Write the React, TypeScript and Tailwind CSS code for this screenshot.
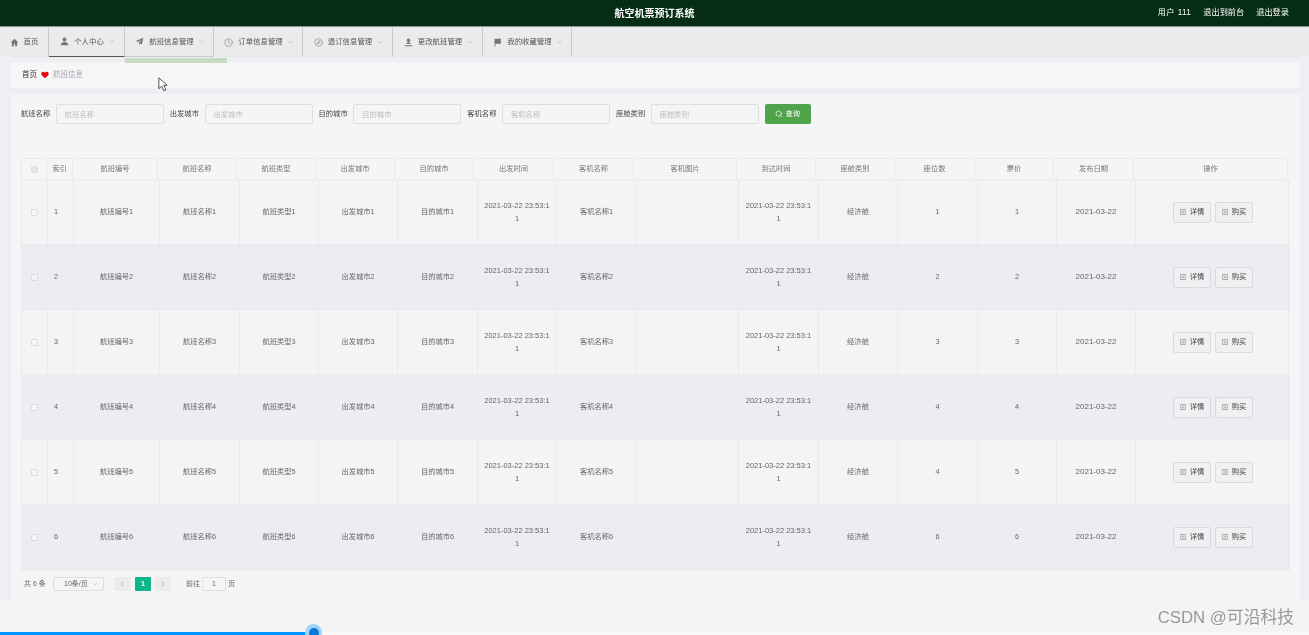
import { ChevronDown, ChevronLeft, ChevronRight, Clock, Compass, Search } from "lucide-react";
import { ReactNode } from "react";

const tabs: { label: string; icon: ReactNode; width: string; active?: boolean; open?: boolean }[] = [
  {
    label: "个人中心",
    width: "w-[76px]",
    active: true,
    icon: (
      <svg viewBox="0 0 12 12" className="h-[9px] w-[9px] fill-[#777]">
        <circle cx="6" cy="3.4" r="2.6" />
        <path d="M1 11c0-3 2.2-4.2 5-4.2s5 1.2 5 4.2z" />
      </svg>
    ),
  },
  {
    label: "航班信息管理",
    width: "w-[89px]",
    open: true,
    icon: (
      <svg viewBox="0 0 12 12" className="h-[9px] w-[9px] fill-[#777]">
        <path d="M11 1 1 5.2l3.2 1.5L8.5 3.5 5.4 7.6V11l1.9-2.4 2 1z" />
      </svg>
    ),
  },
  { label: "订单信息管理", width: "w-[89px]", icon: <Clock className="h-[9px] w-[9px] text-[#777]" strokeWidth={1.5} /> },
  { label: "退订信息管理", width: "w-[90px]", icon: <Compass className="h-[9px] w-[9px] text-[#777]" strokeWidth={1.5} /> },
  {
    label: "更改航班管理",
    width: "w-[90px]",
    icon: (
      <svg viewBox="0 0 12 12" className="h-[9px] w-[9px] fill-[#777]">
        <circle cx="6" cy="3" r="2.2" />
        <path d="M3 8c0-1.8 1.4-2.5 3-2.5S9 6.200 9 8zM1 9.500h10V11H1z" />
      </svg>
    ),
  },
  {
    label: "我的收藏管理",
    width: "w-[89px]",
    icon: (
      <svg viewBox="0 0 12 12" className="h-[9px] w-[9px] fill-[#777]">
        <path d="M2 1h8.500v6.500H3.200V11.500H2z" />
      </svg>
    ),
  },
];

const filters = ["航班名称", "出发城市", "目的城市", "客机名称", "座舱类别"];

const headers = [
  "索引",
  "航班编号",
  "航班名称",
  "航班类型",
  "出发城市",
  "目的城市",
  "出发时间",
  "客机名称",
  "客机图片",
  "到达时间",
  "座舱类别",
  "座位数",
  "票价",
  "发布日期",
  "操作",
];

const rows = [
  { id: 1, seats: 1 },
  { id: 2, seats: 2 },
  { id: 3, seats: 3 },
  { id: 4, seats: 4 },
  { id: 5, seats: 4 },
  { id: 6, seats: 6 },
];

const headCols =
  "grid-cols-[25px_26px_85px_79px_79px_79px_79px_80px_80px_103px_79px_79px_80px_79px_80px_154px]";
const bodyCols =
  "grid-cols-[26px_26px_86px_80px_79px_79px_80px_79px_80px_102px_80px_79px_80px_79px_79px_153px]";

function Cell({ children, className = "" }: { children?: ReactNode; className?: string }) {
  return (
    <div className={`flex items-center justify-center border-r border-[#e9e9ee] px-1.5 text-center ${className}`}>
      {children}
    </div>
  );
}

function DocIcon() {
  return (
    <svg viewBox="0 0 8 8" className="h-[6px] w-[6px] fill-none stroke-[#999]">
      <rect x="1" y="0.500" width="6" height="7" />
      <path d="M2.500 3h3M2.500 5h3" />
    </svg>
  );
}

function RowButton({ label }: { label: string }) {
  return (
    <button className="flex h-[21px] w-[38px] items-center justify-center gap-1 rounded-[2px] border border-[#ddd8dd] bg-[#f0eff2] text-[7.3px] text-[#444]">
      <DocIcon />
      {label}
    </button>
  );
}

export default function App() {
  return (
    <div className="relative h-[635px] overflow-hidden bg-[#f4f4f4] font-['Liberation_Sans','Noto_Sans_CJK_SC',sans-serif] blur-[0.4px]">
      <header className="grid h-[27px] grid-cols-[1fr_auto_1fr] items-center border-b border-[#8a948c] bg-[#052d13] text-white">
        <div />
        <div className="text-[10px] font-bold">航空机票预订系统</div>
        <div className="flex justify-end gap-3 pr-5 text-[8.2px]">
          <span className="tracking-[0.4px]">用户 111</span>
          <span>退出到前台</span>
          <span>退出登录</span>
        </div>
      </header>

      <nav className="flex h-[30px] bg-[#ebebed] text-[7.4px] text-[#555]">
        <div className="flex w-[49px] items-center justify-center gap-[5px] border-r border-[#c9c9cc]">
          <svg viewBox="0 0 12 12" className="h-[9px] w-[9px] fill-[#777]">
            <path d="M6 1 .8 6h1.700v5h2.700V7.600h1.600V11h2.700V6h1.700z" />
          </svg>
          首页
        </div>
        {tabs.map((tab) => (
          <div
            key={tab.label}
            className={`flex items-center justify-center gap-1 border-r border-[#c9c9cc] pl-0.5 ${tab.width} ${
              tab.active ? "border-b border-b-[#555]" : tab.open ? "border-b border-b-[#c9c9cc]" : ""
            }`}
          >
            {tab.icon}
            <span className="ml-px">{tab.label}</span>
            <ChevronDown className="h-[7px] w-[7px] text-[#aaa]" />
          </div>
        ))}
      </nav>

      <main className="flex h-[544px] flex-col gap-1.5 bg-[#eeeff3] pt-[5px] pr-[9px] pl-[11px]">
        <div className="flex h-[26px] items-center gap-1 bg-[#f6f6f6] pl-[11px] text-[7.5px]">
          <span className="text-[#333]">首页</span>
          <svg viewBox="0 0 12 12" className="h-2 w-2 fill-[#e60012]">
            <path d="M6 11 1.200 6.200C-.5 4 1 1.200 3.300 1.200 4.500 1.200 5.500 2 6 3c.5-1 1.500-1.800 2.700-1.800C11 1.200 12.500 4 10.800 6.200z" />
          </svg>
          <span className="text-[#a3a8b5]">航班信息</span>
        </div>

        <section className="h-[507px] bg-[#f5f5f5] pt-2.5 pl-2.5">
          <div className="flex h-5 items-center text-[7.3px] text-[#444]">
            {filters.map((name) => (
              <div key={name} className="flex items-center gap-1.5 pr-1.5">
                <span className="w-[28.75px] whitespace-nowrap">{name}</span>
                <input
                  placeholder={name}
                  className="h-5 w-[108px] rounded-[2px] border border-[#dfdfe2] bg-[#f5f5f5] px-2 text-[7.3px] placeholder:text-[#b9bcc3]"
                />
              </div>
            ))}
            <button className="flex h-5 w-[46px] items-center justify-center gap-0.5 rounded-[2px] bg-[#4fa34a] text-[7.3px] text-white">
              <Search className="h-2 w-2" />
              查询
            </button>
          </div>

          <div className="mt-[34px] w-[1269px]">
            <div className={`grid h-[22px] w-[1267px] border-y border-l border-[#e9e9ee] text-[7.3px] text-[#777] ${headCols}`}>
              <Cell>
                <span className="h-[7px] w-[7px] rounded-[1px] border border-[#dcdce6] bg-[#e6e6ee]" />
              </Cell>
              {headers.map((title) => (
                <Cell key={title} className="whitespace-nowrap">
                  {title}
                </Cell>
              ))}
            </div>

            {rows.map((row) => (
              <div
                key={row.id}
                className={`grid h-[65px] border-b border-l border-[#e9e9ee] text-[7.3px] text-[#666] ${bodyCols} ${
                  row.id % 2 === 0 ? "bg-[#ecedf2]" : "bg-[#f4f4f5]"
                }`}
              >
                <Cell>
                  <span className="h-[7px] w-[7px] rounded-[1px] border border-[#dcdce0] bg-[#f5f5f5]" />
                </Cell>
                <Cell className="justify-start">{row.id}</Cell>
                <Cell>航班编号{row.id}</Cell>
                <Cell>航班名称{row.id}</Cell>
                <Cell>航班类型{row.id}</Cell>
                <Cell>出发城市{row.id}</Cell>
                <Cell>目的城市{row.id}</Cell>
                <Cell className="break-all text-[7.5px] leading-[13px]">2021-03-22 23:53:11</Cell>
                <Cell>客机名称{row.id}</Cell>
                <Cell />
                <Cell className="break-all text-[7.5px] leading-[13px]">2021-03-22 23:53:11</Cell>
                <Cell>经济舱</Cell>
                <Cell>{row.seats}</Cell>
                <Cell>{row.id}</Cell>
                <Cell className="text-[8px]">2021-03-22</Cell>
                <Cell className="translate-x-0 gap-1 pl-2">
                  <RowButton label="详情" />
                  <RowButton label="购买" />
                </Cell>
              </div>
            ))}
          </div>

          <div className="mt-[7px] flex h-3.5 items-center pl-[3px] text-[7px] text-[#666]">
            <span className="w-[29px]">共 6 条</span>
            <div className="flex h-3.5 w-[51px] items-center justify-between rounded-[2px] border border-[#dedede] pr-1 pl-2.5">
              10条/页
              <ChevronDown className="h-2 w-2 text-[#bbb]" />
            </div>
            <div className="ml-2.5 flex h-3.5 w-4 items-center justify-center rounded-[1px] bg-[#ebebed] text-[#aaa]">
              <ChevronLeft className="h-2 w-2" />
            </div>
            <div className="ml-[5px] flex h-3.5 w-4 items-center justify-center rounded-[1px] bg-[#0cb58a] font-bold text-white">
              1
            </div>
            <div className="ml-1 flex h-3.5 w-4 items-center justify-center rounded-[1px] bg-[#ebebed] text-[#aaa]">
              <ChevronRight className="h-2 w-2" />
            </div>
            <span className="ml-[15px]">前往</span>
            <div className="mx-0.5 flex h-3.5 w-6 items-center justify-center rounded-[2px] border border-[#dedede]">1</div>
            <span>页</span>
          </div>
        </section>
      </main>

      <div className="absolute right-[15px] bottom-[5px] text-[16.800px] leading-6 text-[#999]">CSDN @可沿科技</div>

      {/* leftover of the dropdown that was closing when the shot was taken */}
      <div className="absolute top-[58px] left-[125px] h-[5px] w-[102px] bg-[#c5dcc3]" />

      <svg viewBox="0 0 12 18" className="absolute top-[77px] left-[158px] h-[15px] w-[10px] fill-white stroke-[#333]">
        <path d="M1 1v13l3.500-3 2.500 5.500 2.500-1-2.500-5.500H11z" />
      </svg>

      <div className="absolute bottom-0 h-[3px] w-full bg-[#f9f9f9]" />
      <div className="absolute bottom-0 left-0 h-[3px] w-[313px] bg-[#0096ff]" />
      <div className="absolute top-[624px] left-[305px] flex h-[17px] w-[17px] items-center justify-center rounded-full bg-[#9fd4fa]">
        <div className="h-2.5 w-2.5 rounded-full bg-[#0a78d8]" />
      </div>
    </div>
  );
}
